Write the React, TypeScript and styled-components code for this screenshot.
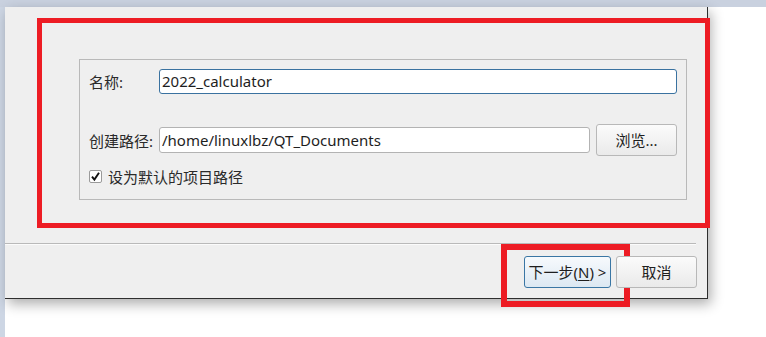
import styled, { createGlobalStyle } from "styled-components";

const GlobalStyle = createGlobalStyle`
  html, body {
    margin: 0;
    padding: 0;
    background: #ffffff;
  }
  body {
    font-family: "Noto Sans", "Noto Sans CJK SC", sans-serif;
    font-size: 15px;
    color: #2a2a2a;
  }
`;

const Page = styled.div`
  width: 766px;
  height: 337px;
  display: grid;
  grid-template-rows: 7px 1fr;
  overflow: hidden;
`;

const TopStrip = styled.div`
  background: #c9d1df;
`;

const Main = styled.div`
  display: flex;
  align-items: flex-start;
`;

const SideStrip = styled.div`
  width: 5px;
  align-self: stretch;
  background: #cdd6e4;
`;

const Dialog = styled.div`
  position: relative;
  width: 703px;
  height: 292px;
  box-sizing: border-box;
  background: #efefef;
  border-right: 1px solid #2e2e2e;
  border-bottom: 1px solid #2e2e2e;
  box-shadow: 3px 5px 12px rgba(0, 0, 0, 0.32);
  display: flex;
  flex-direction: column;
`;

const Content = styled.div`
  padding: 52px 20px 0 74px;
`;

const GroupBox = styled.div`
  height: 141px;
  box-sizing: border-box;
  border: 1px solid #b9b9b9;
  padding: 9px 9px 0 9px;
`;

const FormGrid = styled.div`
  display: grid;
  grid-template-columns: 64px 1fr auto;
  column-gap: 6px;
  row-gap: 30px;
  align-items: center;
`;

const Label = styled.label`
  white-space: nowrap;
`;

const TextInput = styled.input<{ $focused?: boolean; $span?: number }>`
  grid-column: ${({ $span }) => ($span ? `span ${$span}` : "auto")};
  height: ${({ $span }) => ($span ? "25px" : "26px")};
  box-sizing: border-box;
  border: 1px solid ${({ $focused }) => ($focused ? "#3a72a0" : "#b3b3b3")};
  border-radius: 3px;
  background: #ffffff;
  padding: 0 2px 1px;
  font: inherit;
  color: #1e1e1e;
  outline: none;
  min-width: 0;
`;

const PushButton = styled.button<{ $default?: boolean; $width: number }>`
  position: relative;
  width: ${({ $width }) => $width}px;
  height: 32px;
  box-sizing: border-box;
  border: 1px solid ${({ $default }) => ($default ? "#3a76a4" : "#b8b8b8")};
  border-radius: 3px;
  background: ${({ $default }) =>
    $default
      ? "linear-gradient(#f7fafd, #dce8f2)"
      : "linear-gradient(#fbfbfb, #eaeaea)"};
  font: inherit;
  color: #1e1e1e;
  padding: 0 0 2px;
  white-space: nowrap;
  cursor: default;
`;

const CheckRow = styled.div`
  grid-column: 1 / -1;
  display: flex;
  align-items: center;
  gap: 6px;
  margin-top: -20px;
`;

const CheckBox = styled.span`
  width: 13px;
  height: 13px;
  box-sizing: border-box;
  border: 1px solid #9a9a9a;
  border-radius: 2px;
  background: #ffffff;
  display: flex;
  align-items: center;
  justify-content: center;
`;

const Footer = styled.div`
  margin-top: auto;
`;

const Separator = styled.div`
  height: 1px;
  margin-right: 11px;
  background: #b9b9b9;
  border-bottom: 1px solid #fbfbfb;
`;

const ButtonRow = styled.div`
  display: flex;
  justify-content: flex-end;
  gap: 5px;
  padding: 11px 10px 10px 0;
`;

const Underline = styled.span`
  text-decoration: underline;
  text-underline-offset: 2px;
`;

const Highlight = styled.span`
  position: absolute;
  left: -24px;
  top: -13px;
  width: 129px;
  height: 63px;
  box-sizing: border-box;
  border: 6px solid #ed1c24;
  pointer-events: none;
`;

const PanelHighlight = styled.div`
  position: absolute;
  left: 32px;
  top: 11px;
  width: 673px;
  height: 210px;
  box-sizing: border-box;
  border: 5px solid #ed1c24;
  pointer-events: none;
`;

const App = () => {
  return (
    <>
      <GlobalStyle />
      <Page>
        <TopStrip />
        <Main>
          <SideStrip />
          <Dialog>
            <Content>
              <GroupBox>
                <FormGrid>
                  <Label>名称:</Label>
                  <TextInput $focused $span={2} defaultValue="2022_calculator" />
                  <Label>创建路径:</Label>
                  <TextInput defaultValue="/home/linuxlbz/QT_Documents" />
                  <PushButton $width={81}>浏览...</PushButton>
                  <CheckRow>
                    <CheckBox>
                      <svg width="11" height="11" viewBox="0 0 11 11">
                        <path
                          d="M2 5.6 L4.4 8.6 L9 1.8"
                          fill="none"
                          stroke="#111"
                          strokeWidth="1.9"
                        />
                      </svg>
                    </CheckBox>
                    <span>设为默认的项目路径</span>
                  </CheckRow>
                </FormGrid>
              </GroupBox>
            </Content>
            <Footer>
              <Separator />
              <ButtonRow>
                <PushButton $default $width={87}>
                  下一步(<Underline>N</Underline>) &gt;
                  <Highlight />
                </PushButton>
                <PushButton $width={81}>取消</PushButton>
              </ButtonRow>
            </Footer>
            <PanelHighlight />
          </Dialog>
        </Main>
      </Page>
    </>
  );
};

export default App;
